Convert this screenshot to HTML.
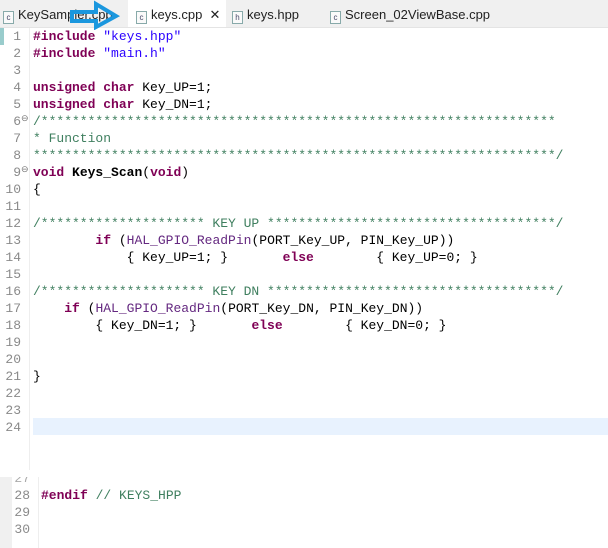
<!DOCTYPE html>
<html><head><style>
body{margin:0;width:608px;height:548px;background:#fff;position:relative;overflow:hidden;font-family:"Liberation Sans",sans-serif}
.tabs{position:absolute;left:0;top:0;width:608px;height:27px;background:#f0f0f0;border-bottom:1px solid #e4e4e4}
.tab{position:absolute;top:0;height:27px;font-size:13px;line-height:29px;color:#222}
.ic{display:inline-block;width:9px;height:11px;border:1px solid #8aa;font-size:8px;line-height:11px;text-align:center;color:#446;vertical-align:-1px;margin-right:4px;background:#fafafa}
.code{position:absolute;font-family:"Liberation Mono",monospace;font-size:13px;line-height:17px;white-space:pre;color:#000}
.ln{position:absolute;font-family:"Liberation Mono",monospace;font-size:13px;line-height:17px;color:#8a8a8a;text-align:right;white-space:pre}
.k{color:#7f0055;font-weight:bold}
.s{color:#2a00ff}
.c{color:#3f7f5f}
.f{color:#642880}
</style></head><body>
<div class="tabs"></div>
<div class="tab" style="left:3px"><span class="ic">c</span>KeySampler.cpp</div>
<div class="tab" style="left:128px;width:98px;background:#fff;padding-left:8px;box-sizing:border-box"><span class="ic">c</span>keys.cpp&nbsp;&nbsp;✕</div>
<div class="tab" style="left:232px"><span class="ic">h</span>keys.hpp</div>
<div class="tab" style="left:330px"><span class="ic">c</span>Screen_02ViewBase.cpp</div>
<svg style="position:absolute;left:0;top:0" width="130" height="30"><polygon points="72,12 96,12 96,4 116,16 96,27 96,21 72,21" fill="none" stroke="#1b97de" stroke-width="4" stroke-linejoin="miter"/></svg>

<div style="position:absolute;left:0;top:28px;width:4px;height:17px;background:#9cc"></div>
<div style="position:absolute;left:29px;top:28px;width:1px;height:447px;background:#eee"></div>
<div style="position:absolute;left:33px;top:418px;width:575px;height:17px;background:#e8f2fe"></div>
<div class="ln" style="left:0;top:28px;width:21px">1
2
3
4
5
6
7
8
9
10
11
12
13
14
15
16
17
18
19
20
21
22
23
24</div>
<div style="position:absolute;left:21px;top:113px;font-size:9px;color:#777">⊖</div>
<div style="position:absolute;left:21px;top:164px;font-size:9px;color:#777">⊖</div>
<div class="code" style="left:33px;top:28px"><span class="k">#include</span> <span class="s">"keys.hpp"</span>
<span class="k">#include</span> <span class="s">"main.h"</span>

<span class="k">unsigned</span> <span class="k">char</span> Key_UP=1;
<span class="k">unsigned</span> <span class="k">char</span> Key_DN=1;
<span class="c">/******************************************************************</span>
<span class="c">* Function</span>
<span class="c">*******************************************************************/</span>
<span class="k">void</span> <b>Keys_Scan</b>(<span class="k">void</span>)
{

<span class="c">/********************* KEY UP *************************************/</span>
        <span class="k">if</span> (<span class="f">HAL_GPIO_ReadPin</span>(PORT_Key_UP, PIN_Key_UP))
            { Key_UP=1; }       <span class="k">else</span>        { Key_UP=0; }

<span class="c">/********************* KEY DN *************************************/</span>
    <span class="k">if</span> (<span class="f">HAL_GPIO_ReadPin</span>(PORT_Key_DN, PIN_Key_DN))
        { Key_DN=1; }       <span class="k">else</span>        { Key_DN=0; }


}</div>

<div style="position:absolute;left:0;top:475px;width:12px;height:73px;background:#f0f0f0"></div>
<div style="position:absolute;left:38px;top:475px;width:1px;height:73px;background:#eee"></div>
<div class="ln" style="left:12px;top:470px;width:18px;color:#aaa">27</div>
<div style="position:absolute;left:0;top:470px;width:608px;height:7px;background:#fff"></div>
<div class="ln" style="left:12px;top:487px;width:18px">28
29
30</div>
<div class="code" style="left:41px;top:487px"><span class="k">#endif</span> <span class="c">// KEYS_HPP</span></div>
</body></html>
